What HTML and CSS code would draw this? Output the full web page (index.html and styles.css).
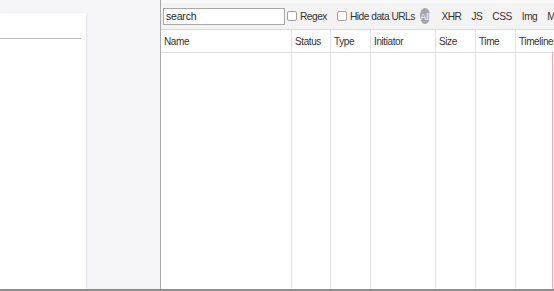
FILE: index.html
```html
<!DOCTYPE html>
<html>
<head>
<meta charset="utf-8">
<link rel="stylesheet" href="styles.css">
</head>
<body>
<div class="page">
  <div class="side">
    <div class="card">
      <div class="card-rule"></div>
    </div>
  </div>
  <div class="panel">
    <div class="toolbar">
      <input class="search" type="text" value="search">
      <label class="check"><span class="box"></span>Regex</label>
      <label class="check"><span class="box"></span>Hide data URLs</label>
      <span class="pill">All</span>
      <span class="divider"></span>
      <span class="filter">XHR</span>
      <span class="filter">JS</span>
      <span class="filter">CSS</span>
      <span class="filter">Img</span>
      <span class="filter">Media</span>
    </div>
    <div class="grid">
      <div class="col c-name"><div class="head">Name</div></div>
      <div class="col c-status"><div class="head">Status</div></div>
      <div class="col c-type"><div class="head">Type</div></div>
      <div class="col c-init"><div class="head">Initiator</div></div>
      <div class="col c-size"><div class="head">Size</div></div>
      <div class="col c-time"><div class="head">Time</div></div>
      <div class="col c-timeline"><div class="head">Timeline – Start Time</div><div class="marker"></div></div>
    </div>
  </div>
</div>
</body>
</html>
```
FILE: styles.css
```css
html, body {
  margin: 0;
  padding: 0;
  height: 100%;
  overflow: hidden;
}
body {
  font-family: "Liberation Sans", Arial, sans-serif;
  background: #f6f6f8;
}
.page {
  display: flex;
  height: 289px;
  border-bottom: 2px solid #8e8e8e;
}
.side {
  width: 160px;
  flex: none;
  background: #f5f5f7;
}
.card {
  width: 86px;
  height: 276px;
  margin-top: 13px;
  background: #fff;
  box-shadow: 1px 0 2px rgba(0,0,0,0.06);
}
.card-rule {
  position: relative;
  top: 25px;
  width: 81px;
  border-top: 1px solid #b9b9b9;
}
.panel {
  flex: 1;
  min-width: 0;
  border-left: 1px solid #a9a9a9;
  background: #fff;
  overflow: hidden;
  display: flex;
  flex-direction: column;
}
.toolbar {
  height: 26px;
  border-top: 3px solid #f9f9f9;
  background: #f3f3f3;
  border-bottom: 1px solid #dadada;
  display: flex;
  align-items: center;
  white-space: nowrap;
  font-size: 10.2px;
  letter-spacing: -0.5px;
  color: #333;
  padding-left: 2px;
}
.search {
  width: 116px;
  height: 15px;
  margin: 0;
  padding: 0 2px;
  border: 1px solid #a8a8a8;
  background: #fff;
  font-family: inherit;
  font-size: 10.5px;
  letter-spacing: -0.2px;
  color: #222;
  outline: none;
}
.check {
  display: flex;
  align-items: center;
  margin-left: 2px;
  margin-right: 8px;
}
.box {
  width: 8px;
  height: 8px;
  border: 1px solid #a0a0a0;
  border-radius: 2px;
  background: #fff;
  margin-right: 3px;
}
.pill {
  margin-left: -3px;
  width: 16px;
  height: 16px;
  border-radius: 50%;
  background: #a6a6a6;
  color: #fff;
  font-size: 9.5px;
  letter-spacing: 0;
  display: flex;
  align-items: center;
  justify-content: center;
}
.divider {
  width: 1px;
  height: 14px;
  background: #d0d0d0;
  margin: 0 6px 0 5px;
}
.filter {
  margin-right: 10px;
}
.grid {
  flex: 1;
  display: grid;
  grid-template-columns: 131px 39px 40px 65px 40px 40px 1fr;
  min-width: 0;
}
.col {
  border-right: 1px solid #e3e3e3;
  position: relative;
  min-width: 0;
}
.c-timeline {
  border-right: none;
}
.head {
  height: 22px;
  border-bottom: 1px solid #dedede;
  font-size: 10px;
  letter-spacing: -0.4px;
  color: #333;
  padding-left: 3px;
  display: flex;
  align-items: center;
  white-space: nowrap;
  overflow: hidden;
}
.marker {
  position: absolute;
  left: 36px;
  top: 22px;
  bottom: 0;
  width: 1px;
  background: #f0a8a8;
}
```
